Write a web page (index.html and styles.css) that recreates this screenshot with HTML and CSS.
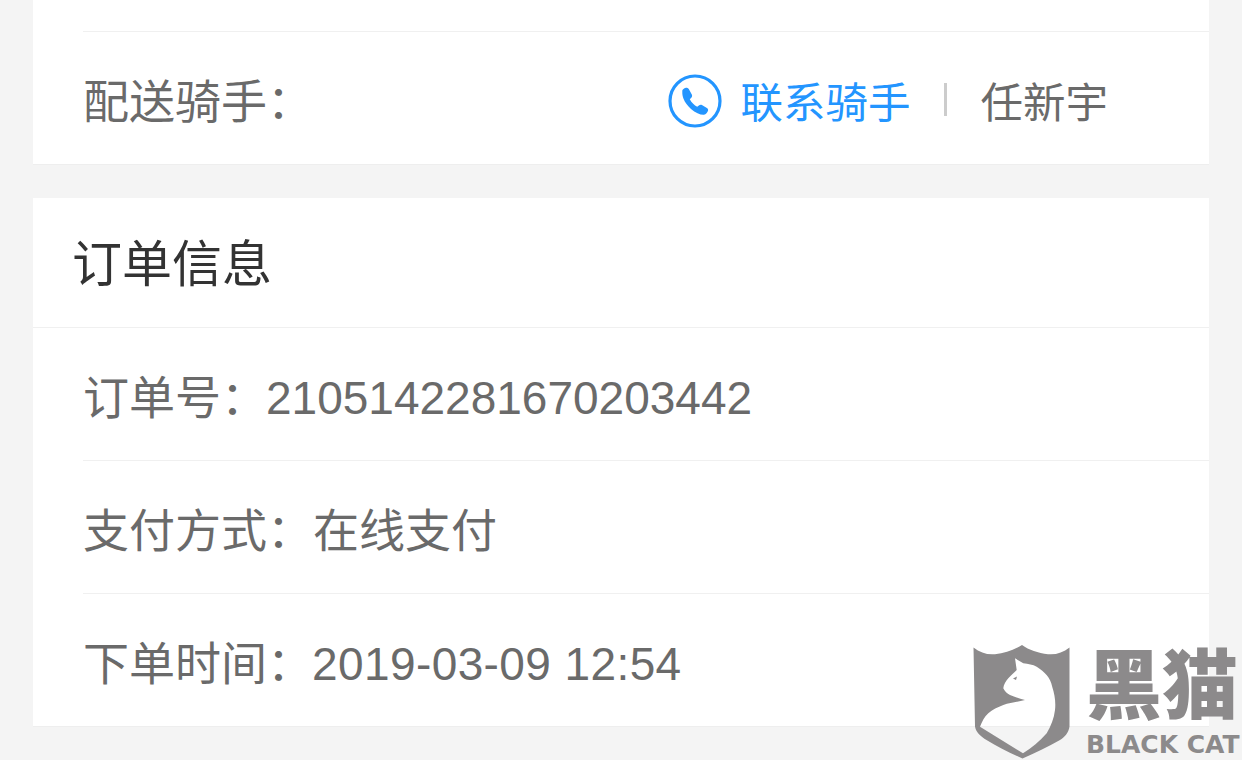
FILE: index.html
```html
<!DOCTYPE html>
<html lang="zh-CN">
  <head>
    <meta charset="UTF-8" />
    <title>订单详情</title>
    <link rel="stylesheet" href="styles.css">
  </head>
  <body>
    <div class="card">
      <div class="row-stub"></div>
      <div class="row row-last rider">
        <span>配送骑手：</span>
        <div class="rider-info">
          <svg class="phone" viewBox="0 0 54 54" fill="none">
            <circle cx="27" cy="27" r="25" stroke="#2395ff" stroke-width="3.2" />
            <path
              fill="#2395ff"
              d="M14.300 17c0-1.700 3-3.400 4.500-3.200 1.200.2 1.900 1 2.400 2l2.600 4.800c.5 1 .4 2-.3 2.800l-1.700 1.900c.9 1.700 2 3.200 3.400 4.500 1.200 1.200 2.500 2.200 4 3l2-1.500c.8-.6 1.800-.7 2.700-.2l5 2.900c1 .6 1.500 1.700 1.100 2.800-.6 1.600-2 3.800-4 4-3.400.3-8.500-2-13-5.900-3.400-3-6.100-6.500-7.500-10.200-.9-2.400-1.300-4.800-1.200-6.700z"
            />
          </svg>
          <span class="contact">联系骑手</span>
          <i class="divider"></i>
          <span>任新宇</span>
        </div>
      </div>
    </div>
    <div class="card">
      <h2 class="title">订单信息</h2>
      <div class="row">订单号：<span class="num">2105142281670203442</span></div>
      <div class="row">支付方式：在线支付</div>
      <div class="row row-last">下单时间：<span class="num date">2019-03-09 12:54</span></div>
    </div>

    <div class="watermark">
      <svg class="shield" viewBox="0 0 98 114">
        <path
          fill="#8c8a8b"
          fill-rule="evenodd"
          d="M.5 2.500C7 7.500 14 10 22 9.200 32 8 41 5 49 0c7 5 16 8 26 9.200 8 .8 15-1.700 21.500-6.700v79c-1 6-4 10-9.500 13.500C75 102 62 108 49.500 113.500 37 108 25 102 13.500 95 8 91.500 3 87.500 2 81.500zM42 13.300l8.300 5c5 .5 9.500 1.400 13.400 3.400 8 5 13.800 11 15.500 20 2.500 7.500 3.700 15.500 2.800 23.300-1 8.500-4 16-8.300 23.300-7 8-15 14.500-23.700 20L7 81.700c2-5 4.500-10 8.300-13.400 4-3.500 9.500-6.300 15-8.300 7-2.500 15-3.200 21.700-5-5.500-1.500-10.500-3-15-5-2.800-1.500-5.500-3.700-6.700-6.700.3-3.600 2.500-7.300 5-10 2.800-3.200 6.500-6.300 8.400-8.300z"
        />
        <path fill="#8c8a8b" d="M40 33.500l4-2-1 3.500z" />
      </svg>
      <div class="brand">
        <span class="brand-cn">黑猫</span>
        <span class="brand-en">BLACK CAT</span>
      </div>
    </div>
  </body>
</html>
```

FILE: styles.css
```css
html,
body {
  margin: 0;
  height: 760px;
  overflow: hidden;
}
body {
  position: relative;
  background: #f4f4f4;
  font-family: "Liberation Sans", "Noto Sans CJK SC", sans-serif;
  color: #6a6a6a;
  font-size: 46px;
}
.card {
  margin: 0 33px 34px;
  background: #fff;
  box-shadow: 0 1px 0 #eeeeee;
}
.row-stub {
  height: 31px;
}
.row {
  display: flex;
  align-items: center;
  height: 132px;
  margin-left: 50px;
  border-bottom: 1px solid #f0f0f0;
  white-space: pre;
}
.row-stub + .row {
  border-top: 1px solid #f0f0f0;
}
.row-last {
  border-bottom: 0;
}
.rider {
  justify-content: space-between;
  padding-right: 101px;
}
.rider-info {
  display: flex;
  align-items: center;
  margin-top: 2px;
  font-size: 42.5px;
}
.phone {
  width: 54px;
  height: 54px;
  margin: 4px 18px 0 0;
}
.contact {
  color: #2395ff;
}
.divider {
  width: 3px;
  height: 33px;
  margin: 0 33px 0 34px;
  background: #ccc;
}
.title {
  margin: 0;
  height: 129px;
  padding-left: 39px;
  line-height: 135px;
  font-size: 50px;
  font-weight: 400;
  color: #333;
  border-bottom: 1px solid #f0f0f0;
}
.num {
  margin: 8px 0 0 -1px;
}
.date {
  letter-spacing: 0.4px;
}
.watermark {
  position: absolute;
  left: 973px;
  top: 645px;
  display: flex;
  gap: 14px;
}
.shield {
  width: 98px;
  height: 114px;
}
.brand {
  display: flex;
  flex-direction: column;
  width: 160px;
}
.brand-cn {
  margin: 8px 0 0 1px;
  height: 68px;
  line-height: 68px;
  font-size: 76px;
  font-weight: 900;
  color: #8c8a8b;
  white-space: nowrap;
}
.brand-en {
  margin: 11px 0 0 1px;
  line-height: 26px;
  font-family: "DejaVu Sans", sans-serif;
  font-size: 25px;
  font-weight: 700;
  color: #8c8a8b;
  white-space: nowrap;
}
```
